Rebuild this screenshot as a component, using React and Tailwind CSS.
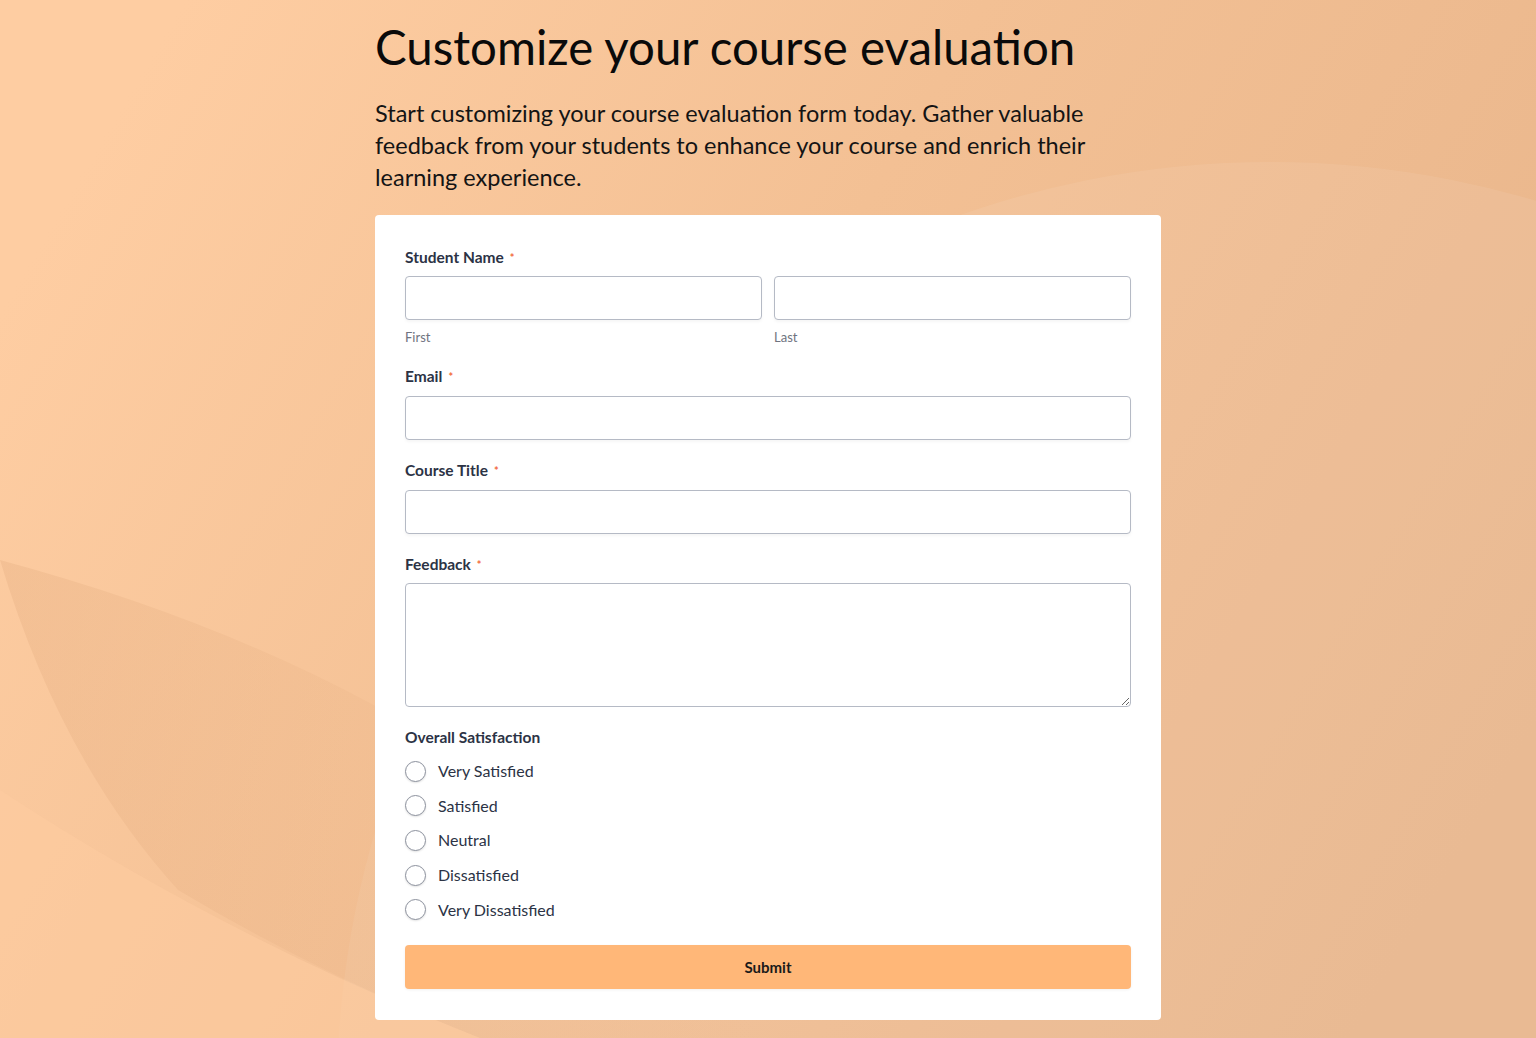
import { useState } from "react";

const options = ["Very Satisfied", "Satisfied", "Neutral", "Dissatisfied", "Very Dissatisfied"];

const Background = () => (
  <svg className="absolute inset-0 h-full w-full" viewBox="0 0 1536 1038" preserveAspectRatio="none">
    <defs>
      <linearGradient id="base" x1="0" y1="0.3" x2="1" y2="0.7">
        <stop offset="0" stopColor="#fecda2" />
        <stop offset="0.45" stopColor="#f3c094" />
        <stop offset="1" stopColor="#e8b58b" />
      </linearGradient>
      <linearGradient id="lens" x1="0" y1="0" x2="1" y2="0">
        <stop offset="0" stopColor="#dfa77a" stopOpacity="0.28" />
        <stop offset="0.6" stopColor="#dfa77a" stopOpacity="0.1" />
        <stop offset="1" stopColor="#dfa77a" stopOpacity="0" />
      </linearGradient>
    </defs>
    <rect width="1536" height="1038" fill="url(#base)" />
    {/* top right light cap */}
    <circle cx="1270" cy="1095" r="933" fill="#ffffff" fillOpacity="0.07" />
    {/* darker lens bottom left */}
    <path d="M0 560 Q60 760 178 890 Q320 975 480 1038 L760 1038 Q520 700 0 560 Z" fill="url(#lens)" />
    {/* light area below the lower curve */}
    <path d="M0 790 Q220 935 480 1038 L0 1038 Z" fill="#fdcba0" fillOpacity="0.6" />
  </svg>
);

const Label = ({ children, required }) => (
  <label className="flex items-center text-[15.5px] font-bold leading-5 text-[#2c3345]">
    {children}
    {required && <span className="ml-[6px] text-[11px] leading-none text-[#f26a3d]">*</span>}
  </label>
);

const inputCls =
  "block w-full h-[44px] rounded-[4px] border border-[#b5bac5] bg-white px-3 text-[15px] shadow-[0_2px_3px_rgba(0,0,0,0.04)] outline-none";

export default function App() {
  const [choice, setChoice] = useState("");

  return (
    <div className="relative min-h-screen overflow-hidden" style={{ fontFamily: "Lato, 'Noto Sans', sans-serif" }}>
      <Background />
      <div className="relative mx-auto w-[786px] pt-[19px] pb-[18px]">
        <h1 className="text-[47.4px] leading-[56px] font-normal text-[#0a0a0a]">Customize your course evaluation</h1>
        <p className="mt-[22px] text-[23.5px] leading-[32px] text-[#141414]">
          Start customizing your course evaluation form today. Gather valuable
          <br />
          feedback from your students to enhance your course and enrich their
          <br />
          learning experience.
        </p>

        <div className="mt-[22px] rounded-[4px] bg-white px-[30px] pt-[32px] pb-[31px]">
          {/* Student name */}
          <Label required>Student Name</Label>
          <div className="mt-[9px] grid grid-cols-2 gap-3">
            <div>
              <input className={inputCls} />
              <div className="mt-[9px] text-[13px] leading-4 text-[#6f7380]">First</div>
            </div>
            <div>
              <input className={inputCls} />
              <div className="mt-[9px] text-[13px] leading-4 text-[#6f7380]">Last</div>
            </div>
          </div>

          <div className="mt-[21px]">
            <Label required>Email</Label>
            <input type="email" className={`${inputCls} mt-[10px]`} />
          </div>

          <div className="mt-[20px]">
            <Label required>Course Title</Label>
            <input className={`${inputCls} mt-[10px]`} />
          </div>

          <div className="mt-[20px]">
            <Label required>Feedback</Label>
            <textarea className="mt-[9px] block h-[124px] w-full rounded-[4px] border border-[#b5bac5] bg-white p-3 text-[15px] outline-none" />
          </div>

          <div className="mt-[20px]">
            <Label>Overall Satisfaction</Label>
            <div className="mt-[7px]">
              {options.map((o) => (
                <label key={o} className="flex h-[34.6px] items-center gap-3 text-[16px] text-[#2c3345]">
                  <input
                    type="radio"
                    name="satisfaction"
                    checked={choice === o}
                    onChange={() => setChoice(o)}
                    className="h-[21px] w-[21px] appearance-none rounded-full border border-[#8d929e] bg-white shadow-[0_1px_2px_rgba(0,0,0,0.12)] checked:border-[6px] checked:border-[#ffb778]"
                  />
                  {o}
                </label>
              ))}
            </div>
          </div>

          <button
            type="submit"
            className="mt-[18px] block h-[44px] w-full rounded-[4px] bg-[#ffb778] text-[15px] font-bold text-[#1a1a1a] shadow-[0_1px_3px_rgba(0,0,0,0.06)]"
          >
            Submit
          </button>
        </div>
      </div>
    </div>
  );
}
